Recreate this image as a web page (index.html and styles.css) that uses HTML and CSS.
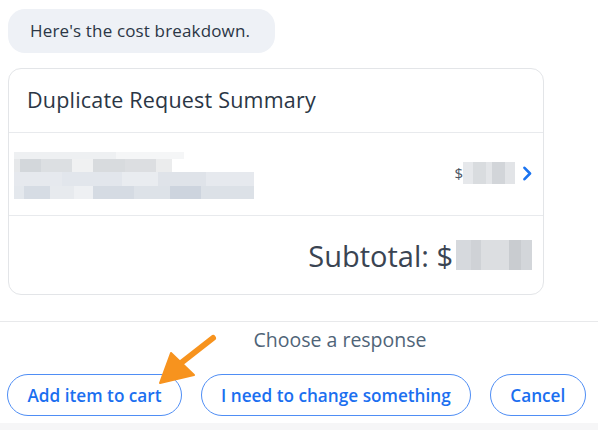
FILE: index.html
```html
<!DOCTYPE html>
<html>
<head>
<meta charset="utf-8">
<link rel="stylesheet" href="styles.css">
</head>
<body>
<div class="chat">
  <div class="bubble">Here's the cost breakdown.</div>
  <div class="card">
    <div class="card-head">Duplicate Request Summary</div>
    <div class="card-row">
      <div class="blur-desc">
        <div class="s s1"></div>
        <div class="s s2"></div>
        <div class="s s3"></div>
        <div class="s s4"></div>
      </div>
      <div class="price">
        <span class="dollar">$</span><span class="blur-price"></span>
        <svg class="chev" width="11" height="15" viewBox="0 0 11 15"><path d="M2.5 1.8 L8 7.5 L2.5 13.2" fill="none" stroke="#1a73f0" stroke-width="2.6" stroke-linecap="round" stroke-linejoin="round"/></svg>
      </div>
    </div>
    <div class="card-total">
      <span class="total-label">Subtotal: $</span><span class="blur-total"></span>
    </div>
  </div>
</div>
<div class="responses">
  <div class="choose">Choose a response</div>
  <div class="buttons">
    <button class="btn">Add item to cart</button>
    <button class="btn">I need to change something</button>
    <button class="btn">Cancel</button>
  </div>
</div>
<svg class="arrow" width="70" height="60" viewBox="0 0 70 60">
  <line x1="62" y1="7" x2="30" y2="32" stroke="#f7931e" stroke-width="6" stroke-linecap="round"/>
  <polygon points="20,22 43,44 9,52" fill="#f7931e" stroke="#f7931e" stroke-width="2" stroke-linejoin="round"/>
</svg>
</body>
</html>
```

FILE: styles.css
```css
html, body {
  margin: 0;
  padding: 0;
}
body {
  width: 598px;
  height: 430px;
  background: #fff;
  font-family: "Open Sans", "Noto Sans", sans-serif;
  position: relative;
  overflow: hidden;
}
.chat {
  padding: 9px 0 0 8px;
  display: flex;
  flex-direction: column;
  align-items: flex-start;
}
.bubble {
  background: #eef1f6;
  color: #2b3645;
  font-size: 17px;
  letter-spacing: 0.15px;
  height: 44px;
  line-height: 44px;
  padding: 0 0 0 22px;
  border-radius: 17px;
  box-sizing: border-box;
  width: 267px;
  white-space: nowrap;
}
.card {
  margin-top: 15px;
  width: 536px;
  height: 227px;
  box-sizing: border-box;
  border: 1px solid #e3e5e8;
  border-radius: 13px;
  display: flex;
  flex-direction: column;
}
.card-head {
  height: 64px;
  box-sizing: border-box;
  border-bottom: 1.5px solid #e8eaed;
  font-size: 21.5px;
  letter-spacing: 0.2px;
  color: #2b3645;
  padding-left: 18px;
  line-height: 62px;
}
.card-row {
  height: 83px;
  box-sizing: border-box;
  border-bottom: 1.5px solid #e8eaed;
  display: flex;
  align-items: center;
  justify-content: space-between;
  padding: 0 10px 0 5px;
}
.blur-desc {
  width: 240px;
  display: flex;
  flex-direction: column;
  margin-top: 2px;
}
.s { height: 13px; }
.s1 {
  height: 7px;
  width: 170px;
  background: linear-gradient(90deg, #eef0f2 0 60%, #f5f6f7 60% 100%);
}
.s2 {
  width: 158px;
  background: linear-gradient(90deg, #e6e8ea 0 4%, #d3d7db 4% 17%, #dcdfe2 17% 37%, #f0f1f2 37% 50%, #d8dbde 50% 70%, #dcdee1 70% 90%, #ebeced 90% 100%);
}
.s3 {
  height: 14px;
  background: linear-gradient(90deg, #e6e9ee 0 20%, #e2e6ec 20% 45%, #e9ecf0 45% 60%, #dfe3e9 60% 80%, #e6e9ee 80% 100%);
}
.s4 {
  background: linear-gradient(90deg, #e4e8ed 0 4%, #d6dce4 4% 15%, #e7eaee 15% 25%, #eef0f3 25% 33%, #d5dbe3 33% 50%, #dde2e8 50% 65%, #cdd4de 65% 78%, #dce1e7 78% 100%);
}
.price {
  display: flex;
  align-items: center;
  margin-top: -2px;
}
.dollar {
  font-size: 15px;
  color: #4a5563;
}
.blur-price {
  width: 52px;
  height: 22px;
  background: linear-gradient(90deg, #e6e8eb 0 20%, #d9dcdf 20% 45%, #e3e5e8 45% 55%, #d2d5d9 55% 80%, #e2e4e7 80% 100%);
  margin-right: 7px;
}
.chev { display: block; }
.card-total {
  flex: 1;
  display: flex;
  align-items: center;
  justify-content: flex-end;
  padding-right: 11px;
}
.total-label {
  font-size: 29px;
  color: #3a4452;
}
.blur-total {
  width: 76px;
  height: 30px;
  margin-left: 3px;
  background: linear-gradient(90deg, #d6d9dd 0 20%, #cfd2d6 20% 33%, #dcdee1 33% 70%, #c9ccd0 70% 85%, #d3d6da 85% 100%);
}
.responses {
  margin-top: 26px;
  border-top: 1.5px solid #e8e9eb;
  height: 110px;
  background: linear-gradient(#fff 0 101px, #f6f6f7 101px);
}
.choose {
  text-align: center;
  font-size: 19.5px;
  color: #4f6478;
  padding-left: 82px;
  margin-top: 6px;
  line-height: 24px;
}
.buttons {
  display: flex;
  gap: 18.5px;
  padding-left: 7px;
  margin-top: 22px;
}
.btn {
  font-family: "Open Sans", "Noto Sans", sans-serif;
  font-weight: 600;
  font-size: 17.2px;
  color: #1b6ff0;
  background: #fff;
  border: 1.5px solid #4f8ef5;
  border-radius: 22px;
  height: 42px;
  padding: 0 19.5px;
  box-sizing: border-box;
}
.arrow {
  position: absolute;
  left: 151px;
  top: 331px;
}
```
